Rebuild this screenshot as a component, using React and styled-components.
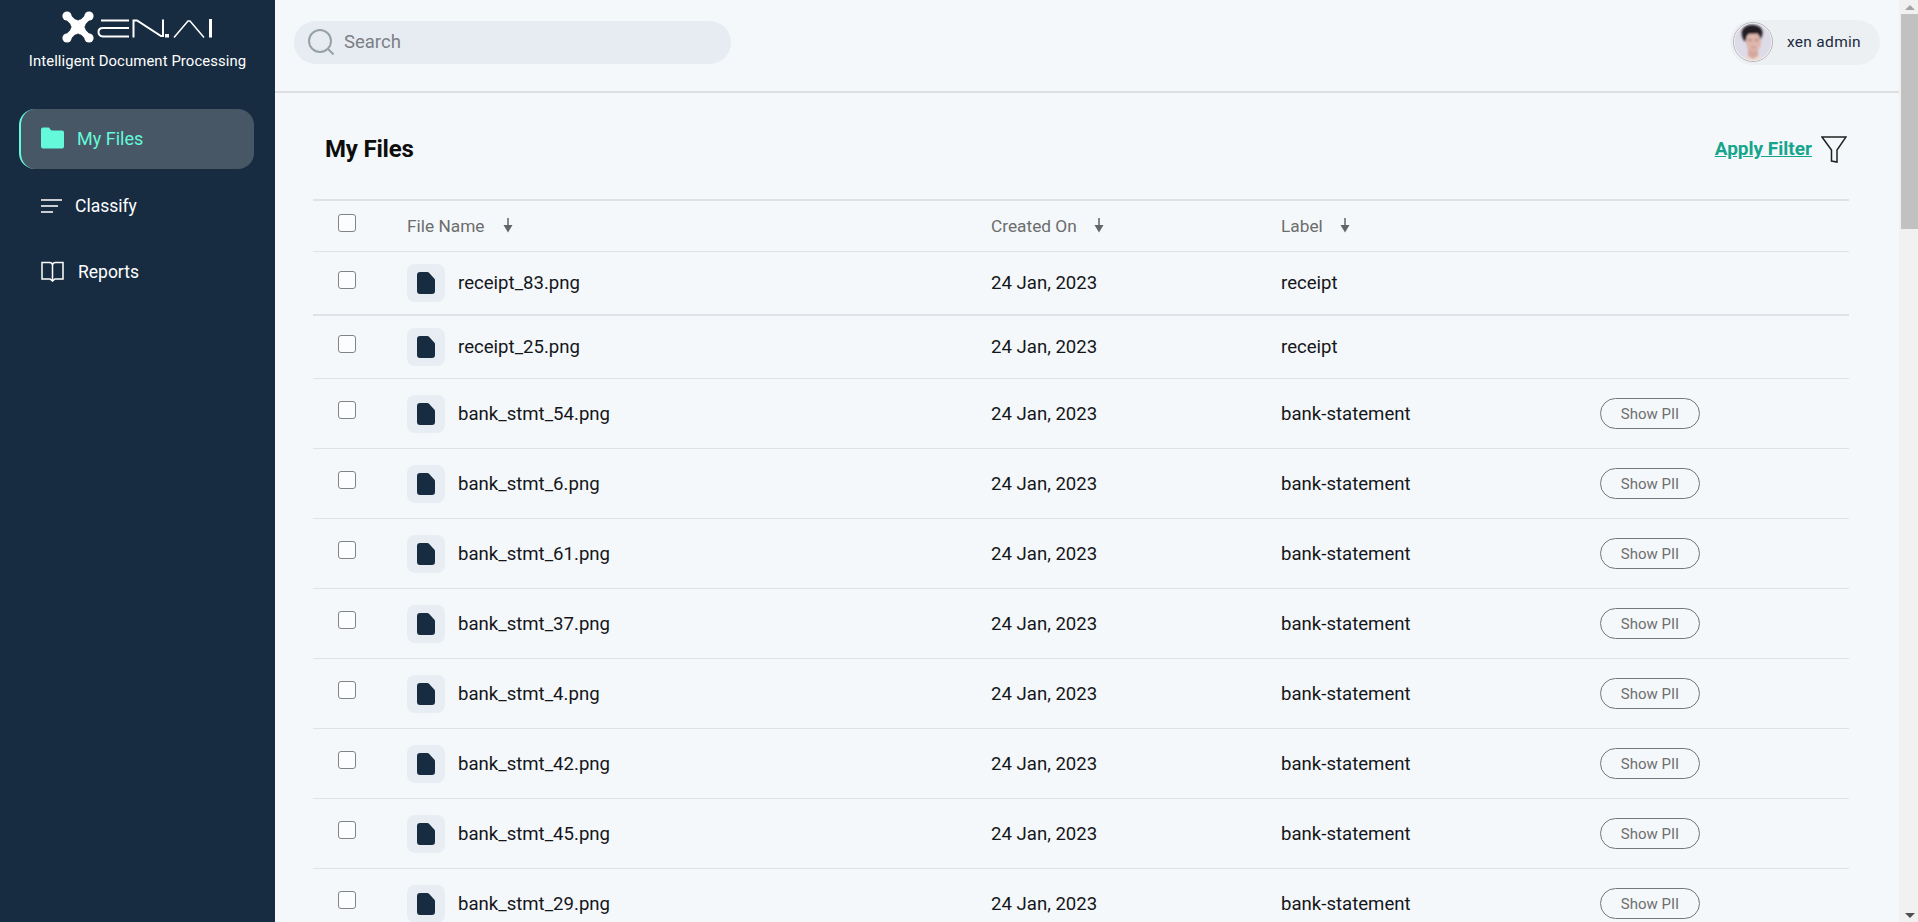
import React from "react";
import styled, { createGlobalStyle } from "styled-components";

const GlobalStyle = createGlobalStyle`
  html, body {
    margin: 0;
    height: 100%;
    overflow: hidden;
  }
  body {
    font-family: Roboto, "Liberation Sans", sans-serif;
    background-color: #f4f8fb;
  }
  * {
    box-sizing: border-box;
  }
`;

const Layout = styled.div`
  display: flex;
  height: 100vh;
`;

const Sidebar = styled.aside`
  flex: 0 0 275px;
  background-color: #182c41;
  color: #fff;
`;

const Brand = styled.div`
  display: flex;
  flex-direction: column;
  align-items: center;
  padding-top: 10px;
`;

const LogoMark = styled.svg`
  display: block;
  width: 156px;
  height: 34px;
  margin-left: 2px;
`;

const Tagline = styled.div`
  margin-top: 7px;
  font-size: 14.85px;
  line-height: 20px;
  letter-spacing: 0.1px;
  white-space: nowrap;
`;

const Nav = styled.nav`
  display: flex;
  flex-direction: column;
  gap: 6.5px;
  margin-top: 38px;
  padding: 0 21px 0 19px;
`;

const NavItem = styled.a`
  display: flex;
  align-items: center;
  gap: ${(props) => props.$gap}px;
  height: 60px;
  padding: 0 0 ${(props) => (props.$active ? 2 : 0)}px 20px;
  border-left: 2px solid ${(props) => (props.$active ? "#64fad9" : "transparent")};
  border-radius: 16px;
  background-color: ${(props) => (props.$active ? "#475766" : "transparent")};
  color: ${(props) => (props.$active ? "#64fad9" : "#fff")};
  font-size: ${(props) => (props.$active ? 18 : 17.5)}px;
`;

const Content = styled.main`
  flex: 1;
  min-width: 0;
  height: 100vh;
  overflow: hidden;
`;

const ScrollRail = styled.div`
  flex: 0 0 19px;
  display: flex;
  flex-direction: column;
  height: 100vh;
  background-color: #f1f1f1;
`;

const RailButton = styled.div`
  display: flex;
  align-items: center;
  justify-content: center;
  height: 14px;
  padding-left: 2px;
`;

const RailArrow = styled.span`
  width: 0;
  height: 0;
  border-left: 5px solid transparent;
  border-right: 5px solid transparent;
  border-bottom: ${(props) => (props.$down ? "0" : "5px solid #a3a3a3")};
  border-top: ${(props) => (props.$down ? "5px solid #505050" : "0")};
`;

const RailTrack = styled.div`
  flex: 1;
  padding-left: 2px;
`;

const RailThumb = styled.div`
  height: 215px;
  background-color: #c1c1c1;
`;

const Topbar = styled.header`
  display: flex;
  align-items: center;
  justify-content: space-between;
  height: 93px;
  padding: 0 19px 7px 19px;
  border-bottom: 2px solid #dcdee0;
`;

const SearchBox = styled.label`
  display: flex;
  align-items: center;
  gap: 8px;
  width: 437px;
  height: 43px;
  padding-left: 14px;
  border-radius: 22px;
  background-color: #e7ebf2;
`;

const SearchIcon = styled.svg`
  width: 26px;
  height: 26px;
  flex: none;
`;

const SearchInput = styled.input`
  flex: 1;
  min-width: 0;
  border: 0;
  outline: 0;
  background: transparent;
  font-family: inherit;
  font-size: 18.5px;

  &::placeholder {
    color: #7c7f84;
    opacity: 1;
  }
`;

const UserPill = styled.div`
  display: flex;
  align-items: center;
  gap: 14px;
  width: 150px;
  height: 45px;
  padding-left: 3px;
  border-radius: 23px;
  background-color: #ecf0f3;
  color: #1b2b40;
  font-size: 15.5px;
  letter-spacing: 0.3px;
  white-space: nowrap;
`;

const Avatar = styled.svg`
  width: 40px;
  height: 40px;
  flex: none;
`;

const Section = styled.section`
  padding: 0 50px 0 38px;
`;

const TitleRow = styled.div`
  display: flex;
  align-items: center;
  justify-content: space-between;
  height: 106px;
  padding: 6px 2px 0 12px;
`;

const Title = styled.h1`
  margin: 0;
  color: #0d0d0d;
  font-size: 24px;
  font-weight: 700;
  letter-spacing: -0.2px;
`;

const FilterLink = styled.a`
  display: flex;
  align-items: center;
  gap: 9px;
  color: #16a58c;
  font-size: 19px;
  font-weight: 700;
`;

const FilterLabel = styled.span`
  padding-bottom: 1px;
  text-decoration: underline;
`;

const FilterIcon = styled.svg`
  width: 26px;
  height: 27px;
`;

const Table = styled.table`
  width: 100%;
  table-layout: fixed;
  border-collapse: collapse;
  border-top: 2px solid #dfe3e7;
`;

const Row = styled.tr`
  height: ${(props) => props.$height}px;
  border-bottom: ${(props) => (props.$thick ? "2px" : "1px")} solid #dfe3e7;
`;

const Th = styled.th`
  padding: 0;
  color: #6d6d6d;
  font-size: 17.3px;
  font-weight: 400;
  text-align: start;
`;

const Td = styled.td`
  padding: 1px 0 0;
  color: #14161a;
  font-size: 18.6px;
`;

const CheckCell = styled.td`
  padding: 0 0 6px 25px;
  line-height: 0;
`;

const CheckHead = styled.th`
  padding: 0 0 6px 25px;
  line-height: 0;
`;

const Checkbox = styled.input.attrs({ type: "checkbox" })`
  appearance: none;
  display: block;
  width: 18px;
  height: 18px;
  margin: 0;
  border: 1.5px solid #838383;
  border-radius: 3px;
  background-color: #fcfdfe;
`;

const HeadLabel = styled.span`
  display: inline-flex;
  align-items: center;
  gap: ${(props) => props.$gap}px;
`;

const SortIcon = styled.svg`
  width: 10px;
  height: 15px;
`;

const FileName = styled.div`
  display: flex;
  align-items: center;
  gap: 13px;
`;

const FileBadge = styled.span`
  display: flex;
  align-items: center;
  justify-content: center;
  width: 38px;
  height: 38px;
  border-radius: 8px;
  background-color: #e8edf3;
`;

const FileIcon = styled.svg`
  width: 18px;
  height: 22px;
`;

const PiiButton = styled.button`
  width: 100px;
  height: 31px;
  padding: 0;
  border: 1px solid #767676;
  border-radius: 16px;
  background: transparent;
  color: #6f6f6f;
  font-family: inherit;
  font-size: 15px;
`;

const Logo = () => (
  <LogoMark viewBox="0 0 156 34" role="img" aria-label="XEN.AI logo">
    <g stroke="#fff" strokeLinecap="round" fill="none">
      <path d="M7 7 27 27M27 7 7 27" strokeWidth="6.500" />
      <path d="M14 14 20 20M20 14 14 20" strokeWidth="9" />
    </g>
    <g fill="#fff">
      <circle cx="6" cy="6" r="4.6" />
      <circle cx="28" cy="6" r="4.6" />
      <circle cx="6" cy="28" r="4.6" />
      <circle cx="28" cy="28" r="4.6" />
      <rect x="104" y="24" width="4" height="3.5" />
    </g>
    <g stroke="#fff" fill="none">
      <path d="M40 10.5H68M68 18H42Q37.5 18 37.5 22T42 26.5H68" strokeWidth="2" />
      <path d="M72.5 27.500V10.500H76L100 26H102V9.500" strokeWidth="2" />
      <path d="M113 27.500 127 11H129L143 27.500" strokeWidth="1.500" />
      <path d="M149.500 9V27.500" strokeWidth="3" />
    </g>
  </LogoMark>
);

const FolderIcon = () => (
  <svg width="23" height="22" viewBox="0 0 23 22">
    <path
      d="M0 2.500A2 2 0 0 1 2 .500H7.500C9 .500 9 3.500 11 3.500H21A2 2 0 0 1 23 5.500V19.500A2 2 0 0 1 21 21.500H2A2 2 0 0 1 0 19.500Z"
      fill="#64fad9"
    />
  </svg>
);

const ClassifyIcon = () => (
  <svg width="22" height="14" viewBox="0 0 22 14">
    <path d="M0 1H21M0 7H17M0 13H12" stroke="#c9cdd2" strokeWidth="1.800" />
  </svg>
);

const BookIcon = () => (
  <svg width="23" height="22" viewBox="0 0 23 22" fill="none">
    <path
      d="M1 1.500H8.500C10.300 1.500 11.500 2.500 11.500 4.500C11.500 2.500 12.700 1.500 14.500 1.500H22V18H14L11.500 20L9 18H1ZM11.500 4.500V20"
      stroke="#fff"
      strokeWidth="1.500"
    />
  </svg>
);

const SortArrow = () => (
  <SortIcon viewBox="0 0 10 15">
    <path d="M5 0V9" stroke="#646464" strokeWidth="1.500" />
    <path d="M.500 7H9.500L5 14.500Z" fill="#646464" />
  </SortIcon>
);

const files = [
  ["receipt_83.png", "receipt"],
  ["receipt_25.png", "receipt"],
  ["bank_stmt_54.png", "bank-statement"],
  ["bank_stmt_6.png", "bank-statement"],
  ["bank_stmt_61.png", "bank-statement"],
  ["bank_stmt_37.png", "bank-statement"],
  ["bank_stmt_4.png", "bank-statement"],
  ["bank_stmt_42.png", "bank-statement"],
  ["bank_stmt_45.png", "bank-statement"],
  ["bank_stmt_29.png", "bank-statement"],
];

const rowHeight = (i) => (i === 0 ? 64 : i === 1 ? 63 : 70);

const App = () => {
  return (
    <Layout>
      <GlobalStyle />
      <Sidebar>
        <Brand>
          <Logo />
          <Tagline>Intelligent Document Processing</Tagline>
        </Brand>
        <Nav>
          <NavItem $active $gap={13}>
            <FolderIcon />
            My Files
          </NavItem>
          <NavItem $gap={12}>
            <ClassifyIcon />
            Classify
          </NavItem>
          <NavItem $gap={14}>
            <BookIcon />
            Reports
          </NavItem>
        </Nav>
      </Sidebar>

      <Content>
        <Topbar>
          <SearchBox>
            <SearchIcon viewBox="0 0 26 26" fill="none">
              <circle cx="12" cy="12" r="11" stroke="#95a2aa" strokeWidth="2" />
              <path d="M20 20 25.500 25.500" stroke="#95a2aa" strokeWidth="2" />
            </SearchIcon>
            <SearchInput placeholder="Search" />
          </SearchBox>
          <UserPill>
            <Avatar viewBox="0 0 40 40" role="img" aria-label="xen admin">
              <defs>
                <clipPath id="avatarClip">
                  <circle cx="20" cy="20" r="18.500" />
                </clipPath>
                <filter id="avatarBlur">
                  <feGaussianBlur stdDeviation="0.900" />
                </filter>
              </defs>
              <circle cx="20" cy="20" r="19.500" fill="#fff" stroke="#b5b5b8" />
              <g clipPath="url(#avatarClip)">
                <rect width="40" height="40" fill="#dedbe8" />
                <g filter="url(#avatarBlur)">
                  <path d="M6 42C7 35 14 33 20 33S33 35 34 42Z" fill="#ecdcd2" />
                  <path d="M15 26H25V34L20 37 15 34Z" fill="#d4a89c" />
                  <ellipse cx="20.500" cy="20" rx="7.500" ry="9.500" fill="#deb6ab" />
                  <path d="M9 14C7 6 14 2 21 3 28 4 31 8 29 14 28 16 28 17 27.500 18 27 15 25.500 12 23.500 11.500 20 12.500 17 11.500 15 12.500 13.500 14 13 17 13 20 11 19 9.500 17 9 14Z" fill="#231b20" />
                  <path d="M15.500 18H18.500M22 18H25" stroke="#6a4a48" strokeWidth="0.900" />
                  <path d="M18.500 25.500H22.500" stroke="#c07c78" strokeWidth="1" />
                </g>
              </g>
            </Avatar>
            xen admin
          </UserPill>
        </Topbar>

        <Section>
          <TitleRow>
            <Title>My Files</Title>
            <FilterLink>
              <FilterLabel>Apply Filter</FilterLabel>
              <FilterIcon viewBox="0 0 26 27" fill="none">
                <path d="M1 1H25L16 14V26L10.500 25V14Z" stroke="#222" strokeWidth="1.500" />
              </FilterIcon>
            </FilterLink>
          </TitleRow>

          <Table>
            <colgroup>
              <col width="94" />
              <col width="584" />
              <col width="290" />
              <col width="319" />
              <col />
            </colgroup>
            <thead>
              <Row $height={51}>
                <CheckHead>
                  <Checkbox />
                </CheckHead>
                <Th>
                  <HeadLabel $gap={19}>
                    File Name
                    <SortArrow />
                  </HeadLabel>
                </Th>
                <Th>
                  <HeadLabel $gap={17}>
                    Created On
                    <SortArrow />
                  </HeadLabel>
                </Th>
                <Th>
                  <HeadLabel $gap={17}>
                    Label
                    <SortArrow />
                  </HeadLabel>
                </Th>
                <Th />
              </Row>
            </thead>
            <tbody>
              {files.map(([name, label], i) => (
                <Row key={name} $height={rowHeight(i)} $thick={i === 0}>
                  <CheckCell>
                    <Checkbox />
                  </CheckCell>
                  <Td>
                    <FileName>
                      <FileBadge>
                        <FileIcon viewBox="0 0 18 22">
                          <path
                            d="M3 0H10.500C11 0 11.500 .2 12 .7L17.300 6.500C17.800 7 18 7.500 18 8V19A3 3 0 0 1 15 22H3A3 3 0 0 1 0 19V3A3 3 0 0 1 3 0Z"
                            fill="#182c41"
                          />
                        </FileIcon>
                      </FileBadge>
                      {name}
                    </FileName>
                  </Td>
                  <Td>24 Jan, 2023</Td>
                  <Td>{label}</Td>
                  <Td>{label === "bank-statement" && <PiiButton>Show PII</PiiButton>}</Td>
                </Row>
              ))}
            </tbody>
          </Table>
        </Section>
      </Content>

      <ScrollRail aria-hidden="true">
        <RailButton>
          <RailArrow />
        </RailButton>
        <RailTrack>
          <RailThumb />
        </RailTrack>
        <RailButton>
          <RailArrow $down />
        </RailButton>
      </ScrollRail>
    </Layout>
  );
};

export default App;
